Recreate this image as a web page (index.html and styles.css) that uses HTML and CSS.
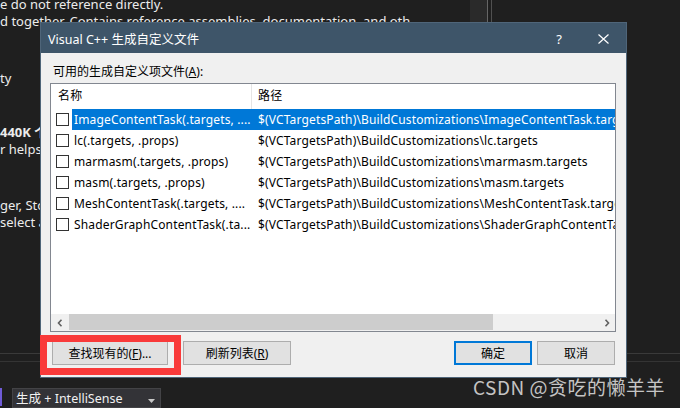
FILE: index.html
```html
<!DOCTYPE html>
<html>
<head>
<meta charset="utf-8">
<link rel="stylesheet" href="styles.css">
</head>
<body>
<div class="ide">
  <div class="upper">
    <div class="textpane">
      <div class="blk blk1">
        <p>e do not reference directly.</p>
        <p>d together. Contains reference assemblies, documentation, and oth</p>
      </div>
      <div class="blk blk2">
        <p>ty</p>
      </div>
      <div class="blk blk3">
        <p><b>440K 个下载</b></p>
        <p>r helps you build</p>
      </div>
      <div class="blk blk4">
        <p>ger, Storage</p>
        <p>select an option</p>
      </div>
    </div>
    <div class="col"></div>
    <div class="vl1"></div>
    <div class="vgap"></div>
    <div class="vl2"></div>
    <div class="rightpane"></div>
  </div>
  <div class="hr"></div>
  <div class="hsp"></div>
  <div class="hr2"></div>
  <div class="statusbar">
    <div class="accent"></div>
    <div class="config">
      <span class="cfgtext">生成 + IntelliSense</span>
      <svg class="cfgarrow" width="7" height="4" viewBox="0 0 7 4"><path d="M0 0H7L3.5 4Z" fill="#c8c8c8"/></svg>
    </div>
  </div>
</div>

<div class="dialog">
  <div class="titlebar">
    <span class="title">Visual C++ 生成自定义文件</span>
    <span class="help">?</span>
    <svg class="close" width="11" height="10" viewBox="0 0 11 10"><path d="M0.5 0.5L10.5 9.5M10.5 0.5L0.5 9.5" stroke="#ffffff" stroke-width="1.2" fill="none"/></svg>
  </div>
  <div class="dbody">
    <div class="label">可用的生成自定义项文件(<u>A</u>):</div>
    <div class="list">
      <div class="header">
        <div class="h1">名称</div>
        <div class="h2">路径</div>
      </div>
      <div class="rows">
        <div class="row sel">
          <div class="cbw"><span class="cb"></span></div>
          <div class="c1">ImageContentTask(.targets, ....</div>
          <div class="c2">$(VCTargetsPath)\BuildCustomizations\ImageContentTask.targets</div>
        </div>
        <div class="row">
          <div class="cbw"><span class="cb"></span></div>
          <div class="c1">lc(.targets, .props)</div>
          <div class="c2">$(VCTargetsPath)\BuildCustomizations\lc.targets</div>
        </div>
        <div class="row">
          <div class="cbw"><span class="cb"></span></div>
          <div class="c1">marmasm(.targets, .props)</div>
          <div class="c2">$(VCTargetsPath)\BuildCustomizations\marmasm.targets</div>
        </div>
        <div class="row">
          <div class="cbw"><span class="cb"></span></div>
          <div class="c1">masm(.targets, .props)</div>
          <div class="c2">$(VCTargetsPath)\BuildCustomizations\masm.targets</div>
        </div>
        <div class="row">
          <div class="cbw"><span class="cb"></span></div>
          <div class="c1">MeshContentTask(.targets, ....</div>
          <div class="c2">$(VCTargetsPath)\BuildCustomizations\MeshContentTask.targets</div>
        </div>
        <div class="row">
          <div class="cbw"><span class="cb"></span></div>
          <div class="c1">ShaderGraphContentTask(.ta...</div>
          <div class="c2">$(VCTargetsPath)\BuildCustomizations\ShaderGraphContentTask.targets</div>
        </div>
      </div>
      <div class="hscroll">
        <div class="sarrow"><svg width="6" height="8" viewBox="0 0 6 8"><path d="M4.5 0.8L1.5 4L4.5 7.2" stroke="#606060" stroke-width="1.6" fill="none"/></svg></div>
        <div class="thumb"></div>
        <div class="track"></div>
        <div class="sarrow"><svg width="6" height="8" viewBox="0 0 6 8"><path d="M1.5 0.8L4.5 4L1.5 7.2" stroke="#606060" stroke-width="1.6" fill="none"/></svg></div>
      </div>
    </div>
    <div class="buttons">
      <button class="btn bfind">查找现有的(<u>F</u>)...</button>
      <button class="btn brefresh">刷新列表(<u>R</u>)</button>
      <div class="bspace"></div>
      <button class="btn bok">确定</button>
      <button class="btn bcancel">取消</button>
    </div>
  </div>
</div>

<div class="redbox"></div>
<div class="watermark">CSDN @贪吃的懒羊羊</div>
</body>
</html>
```

FILE: styles.css
```css
* { box-sizing: border-box; margin: 0; padding: 0; }
html, body { width: 680px; height: 408px; overflow: hidden; }
body {
  background: #1f1f1f;
  position: relative;
  font-family: "Noto Sans", "Noto Sans CJK SC", sans-serif;
}

.ide { display: flex; flex-direction: column; height: 408px; }
.upper { display: flex; height: 357px; }
.textpane {
  width: 470px;
  overflow: hidden;
  color: #ececec;
  font-size: 13px;
  line-height: 17px;
  white-space: nowrap;
}
.blk1 { margin-top: -4px; }
.blk2 { margin-top: 40px; }
.blk3 { margin-top: 37px; }
.blk4 { margin-top: 39px; }
.textpane b { font-weight: 700; }
.col { width: 17px; background: #2a2a2a; height: 30px; }
.vl1 { width: 1px; background: #666666; height: 30px; }
.vgap { width: 3px; }
.vl2 { width: 1px; background: #505050; height: 30px; }
.rightpane { flex: 1; }
.hr { height: 1px; background: #3a3a3a; }
.hsp { height: 7px; }
.hr2 { height: 1px; background: #343434; }
.statusbar { flex: 1; display: flex; align-items: flex-start; padding-top: 24px; }
.accent { width: 2px; height: 18px; background: #6f5bd6; margin-top: 2px; }
.config {
  margin-left: 10px;
  margin-top: 2px;
  width: 149px;
  height: 20px;
  background: #333337;
  border: 1px solid #434346;
  color: #f1f1f1;
  font-size: 12.5px;
  line-height: 16px;
  display: flex;
  align-items: flex-start;
  padding: 2px 5px 0 3px;
}
.cfgtext { flex: 1; white-space: nowrap; }
.cfgarrow { margin-top: 8px; }

/* dialog */
.dialog {
  position: absolute;
  left: 40px;
  top: 22px;
  width: 587px;
  height: 356px;
  border: 1px solid #4f6579;
  background: #f0f0f0;
  display: flex;
  flex-direction: column;
  font-size: 12px;
  color: #000;
}
.titlebar {
  height: 30px;
  background: #3e5569;
  display: flex;
  align-items: center;
  color: #ffffff;
  flex-shrink: 0;
}
.title { flex: 1; padding-left: 7px; font-size: 12.5px; }
.help { font-size: 13px; margin-right: 36px; margin-top: 1px; }
.close { margin-right: 17px; margin-top: 1px; }

.dbody { flex: 1; display: flex; flex-direction: column; padding: 0 10px 0 9px; }
.label { margin-top: 11px; height: 16px; line-height: 16px; padding-left: 3px; white-space: nowrap; }
.list {
  margin-top: 3px;
  height: 249px;
  border: 1px solid #828790;
  background: #ffffff;
  display: flex;
  flex-direction: column;
  letter-spacing: 0.15px;
}
.header { height: 25px; display: flex; line-height: 24px; flex-shrink: 0; }
.h1 { width: 200px; padding-left: 7px; }
.h2 { flex: 1; border-left: 1px solid #e5e5e5; padding-left: 6px; }
.rows { flex: 1; }
.row { height: 21px; display: flex; align-items: stretch; line-height: 21px; white-space: nowrap; }
.cbw { width: 21px; padding-left: 5px; display: flex; align-items: center; }
.cb { width: 13px; height: 13px; border: 1px solid #333333; background: #ffffff; }
.c1 { width: 179px; padding-left: 2px; overflow: hidden; }
.c2 { flex: 1; padding-left: 7px; overflow: hidden; }
.row.sel .c1, .row.sel .c2 { background: #0078d7; color: #ffffff; }

.hscroll { height: 17px; display: flex; flex-shrink: 0; background: #f0f0f0; }
.sarrow { width: 17px; display: flex; align-items: center; justify-content: center; }
.thumb { width: 424px; background: #cdcdcd; margin: 0 1px 1px 1px; }
.track { flex: 1; }

.buttons { margin-top: 9px; height: 24px; display: flex; }
.btn {
  height: 24px;
  background: #e1e1e1;
  border: 1px solid #adadad;
  font-family: "Noto Sans", "Noto Sans CJK SC", sans-serif;
  font-size: 12px;
  color: #000;
}
.bfind { width: 116px; margin-left: 2px; }
.brefresh { width: 108px; margin-left: 15px; }
.bspace { flex: 1; }
.bok { width: 78px; border: 2px solid #0078d7; }
.bcancel { width: 78px; margin-left: 5px; margin-right: 1px; }

.redbox {
  position: absolute;
  left: 40px;
  top: 335px;
  width: 141px;
  height: 40px;
  border: 7px solid #f93a3a;
}
.watermark {
  position: absolute;
  left: 473px;
  top: 376px;
  font-family: "Noto Sans CJK SC", sans-serif;
  font-size: 19px;
  letter-spacing: 0.5px;
  line-height: 22px;
  color: #c4c4c4;
  white-space: nowrap;
}
```
